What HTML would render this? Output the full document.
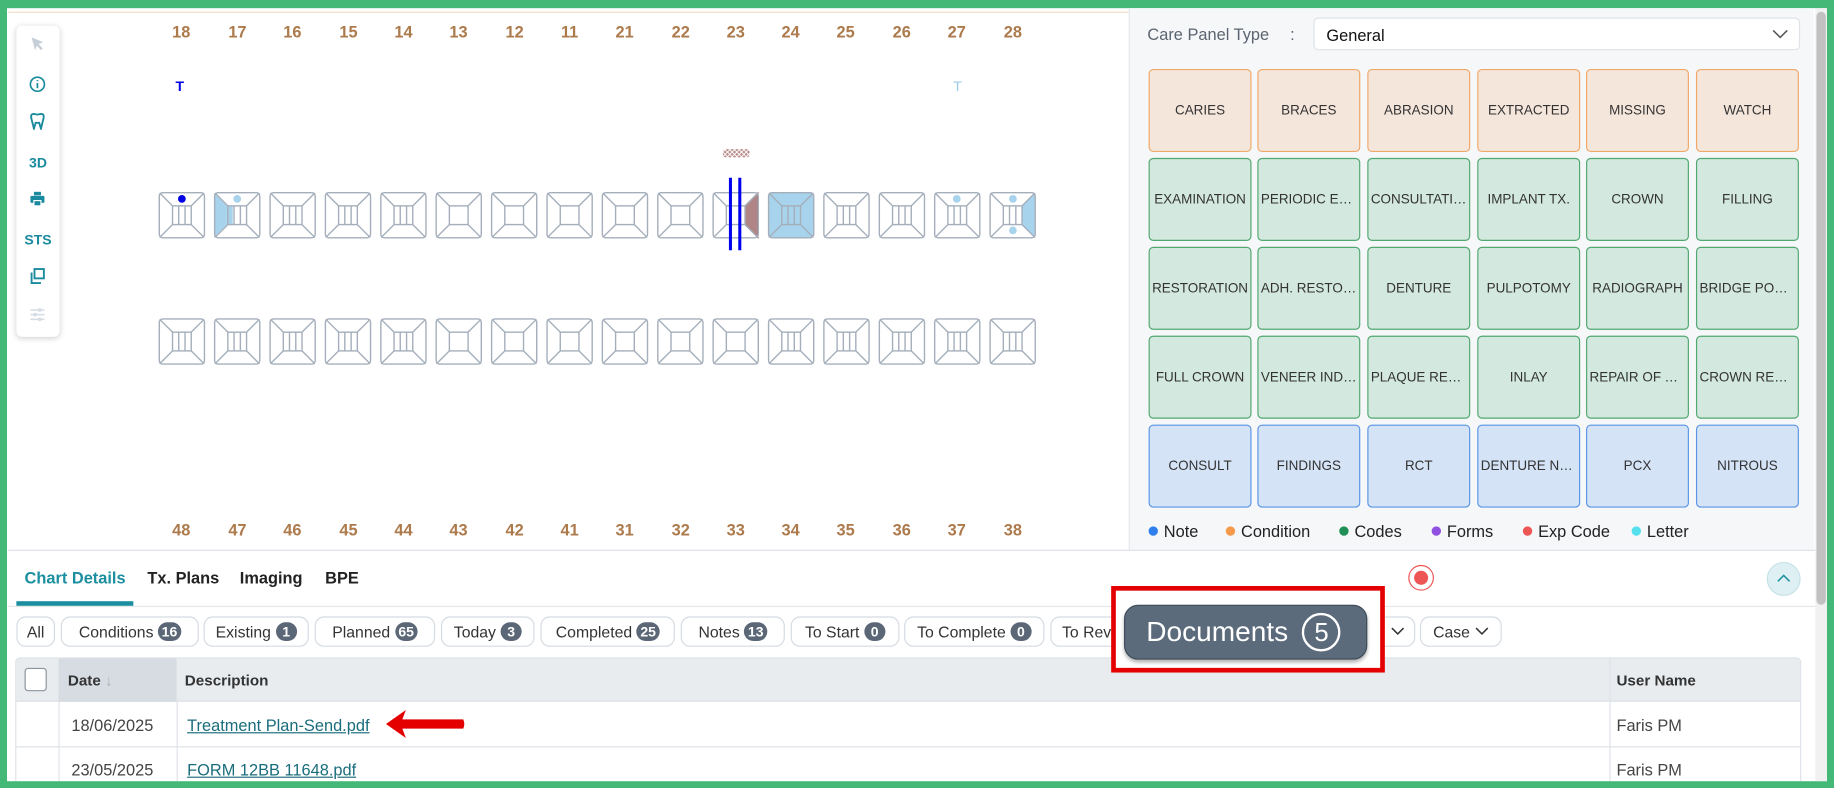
<!DOCTYPE html>
<html><head><meta charset="utf-8"><style>
*{box-sizing:border-box;margin:0;padding:0}
html,body{width:1834px;height:788px;overflow:hidden;background:#44b977}
#s{position:absolute;left:0;top:0;width:1568px;height:674px;transform:scale(1.16964);transform-origin:0 0;font-family:"Liberation Sans",sans-serif;background:#44b977}
.a{position:absolute}
#main{position:absolute;left:6px;top:7px;width:1556px;height:661px;background:#fff;overflow:hidden}
.num{position:absolute;font-weight:bold;font-size:14px;color:#ad7a4c;width:30px;text-align:center}
.btn{position:absolute;width:88px;height:71px;border-radius:4px;font-size:11.5px;color:#333;display:flex;align-items:center;justify-content:center;white-space:nowrap;overflow:hidden;text-overflow:ellipsis;padding:0 2px}
.o{background:#f5e6dc;border:1px solid #f0a868}
.g{background:#d3e8de;border:1px solid #52a871}
.b{background:#d4e3f6;border:1px solid #5a95e6}
.btn span{overflow:hidden;text-overflow:ellipsis;display:block}
.chip{position:absolute;top:527px;height:26px;border:1px solid #d5dbe2;border-radius:8px;font-size:13.5px;color:#333;display:flex;align-items:center;justify-content:center;gap:4px;background:#fff;white-space:nowrap;overflow:hidden}
.bd{display:inline-block;min-width:18px;height:16px;border-radius:8px;background:#5b6776;color:#fff;font-size:12px;line-height:16px;text-align:center;padding:0 3px;font-weight:bold}
.leg{position:absolute;top:446px;font-size:14px;color:#222;display:flex;align-items:center;gap:5px}
.leg i{display:inline-block;width:8px;height:8px;border-radius:50%}
.tb{position:absolute;left:14px;width:37px;text-align:center;color:#1a8a9e;font-weight:bold;font-size:12px}
</style></head><body><div id="s">
<div id="main"></div>
<div class="a" style="left:7px;top:10px;width:958px;height:1px;background:#f0dcc8"></div>
<div class="a" style="left:965px;top:7px;width:586px;height:463px;background:#f5f7f9;border-left:1px solid #e3e7eb"></div>
<div class="a" style="left:1552px;top:7px;width:10px;height:661px;background:#f1f1f1"></div>
<div class="a" style="left:1553px;top:10px;width:8px;height:507px;background:#c1c1c1;border-radius:4px"></div>
<div class="a" style="left:981px;top:21px;font-size:14px;color:#5b6470">Care Panel Type</div>
<div class="a" style="left:1103px;top:21px;font-size:14px;color:#5b6470">:</div>
<div class="a" style="left:1123px;top:15px;width:416px;height:28px;background:#fff;border:1px solid #dfe3e8;border-radius:4px;font-size:14px;color:#111;padding:6px 10px">General
<svg class="a" style="right:9px;top:8px" width="14" height="10" viewBox="0 0 14 10"><path d="M1 2l6 6 6-6" fill="none" stroke="#555" stroke-width="1.3"/></svg></div>

<div class="btn o" style="left:982px;top:59px">CARIES</div>
<div class="btn o" style="left:1075px;top:59px">BRACES</div>
<div class="btn o" style="left:1169px;top:59px">ABRASION</div>
<div class="btn o" style="left:1263px;top:59px">EXTRACTED</div>
<div class="btn o" style="left:1356px;top:59px">MISSING</div>
<div class="btn o" style="left:1450px;top:59px">WATCH</div>

<div class="btn g" style="left:982px;top:135px"><span>EXAMINATION</span></div>
<div class="btn g" style="left:1075px;top:135px"><span>PERIODIC EXAM</span></div>
<div class="btn g" style="left:1169px;top:135px"><span>CONSULTATION</span></div>
<div class="btn g" style="left:1263px;top:135px"><span>IMPLANT TX.</span></div>
<div class="btn g" style="left:1356px;top:135px"><span>CROWN</span></div>
<div class="btn g" style="left:1450px;top:135px"><span>FILLING</span></div>

<div class="btn g" style="left:982px;top:211px"><span>RESTORATION</span></div>
<div class="btn g" style="left:1075px;top:211px"><span>ADH. RESTORATION</span></div>
<div class="btn g" style="left:1169px;top:211px"><span>DENTURE</span></div>
<div class="btn g" style="left:1263px;top:211px"><span>PULPOTOMY</span></div>
<div class="btn g" style="left:1356px;top:211px"><span>RADIOGRAPH</span></div>
<div class="btn g" style="left:1450px;top:211px"><span>BRIDGE PONTIC</span></div>

<div class="btn g" style="left:982px;top:287px"><span>FULL CROWN</span></div>
<div class="btn g" style="left:1075px;top:287px"><span>VENEER INDIRECT</span></div>
<div class="btn g" style="left:1169px;top:287px"><span>PLAQUE REMOVAL</span></div>
<div class="btn g" style="left:1263px;top:287px"><span>INLAY</span></div>
<div class="btn g" style="left:1356px;top:287px"><span>REPAIR OF TIME</span></div>
<div class="btn g" style="left:1450px;top:287px"><span>CROWN REMOVAL</span></div>

<div class="btn b" style="left:982px;top:363px">CONSULT</div>
<div class="btn b" style="left:1075px;top:363px">FINDINGS</div>
<div class="btn b" style="left:1169px;top:363px">RCT</div>
<div class="btn b" style="left:1263px;top:363px"><span>DENTURE NOTE</span></div>
<div class="btn b" style="left:1356px;top:363px">PCX</div>
<div class="btn b" style="left:1450px;top:363px">NITROUS</div>

<div class="leg" style="left:982px"><i style="background:#2f7fec"></i>Note</div>
<div class="leg" style="left:1048px"><i style="background:#f5994a"></i>Condition</div>
<div class="leg" style="left:1145px"><i style="background:#1f8f55"></i>Codes</div>
<div class="leg" style="left:1224px"><i style="background:#9050e0"></i>Forms</div>
<div class="leg" style="left:1302px"><i style="background:#ee5555"></i>Exp Code</div>
<div class="leg" style="left:1395px"><i style="background:#55e0ee"></i>Letter</div>

<div class="a" style="left:14px;top:22px;width:37px;height:266px;background:#fff;border-radius:5px;box-shadow:0 1px 5px rgba(0,0,0,.18)"></div>
<svg class="a" style="left:25px;top:31px" width="14" height="14" viewBox="0 0 14 14"><path d="M2 1l10 4-4 1.5 3.5 4-1.5 1.5-3.5-4L5 12z" fill="#c6cfd8"/></svg>
<svg class="a" style="left:25px;top:65px" width="14" height="14" viewBox="0 0 14 14"><circle cx="7" cy="7" r="6" fill="none" stroke="#1a8a9e" stroke-width="1.4"/><path d="M7 6v4.5M7 3.5v1" stroke="#1a8a9e" stroke-width="1.5"/></svg>
<svg class="a" style="left:25px;top:96px" width="14" height="15" viewBox="0 0 14 15"><path d="M2 2c2-1.5 3.5 0 5 0s3-1.5 5 0c1 2 0 4-.5 6L10 14l-1.5-5H5.5L4 14 2.5 8C2 6 1 4 2 2z" fill="none" stroke="#1a8a9e" stroke-width="1.6"/></svg>
<div class="tb" style="top:132px">3D</div>
<svg class="a" style="left:25px;top:163px" width="14" height="14" viewBox="0 0 14 14"><rect x="4" y="1" width="6" height="3" fill="#1a8a9e"/><rect x="1" y="4.5" width="12" height="6" rx="1" fill="#1a8a9e"/><rect x="4" y="8.5" width="6" height="4.5" fill="#1a8a9e" stroke="#fff" stroke-width="1"/></svg>
<div class="tb" style="top:198px">STS</div>
<svg class="a" style="left:25px;top:229px" width="14" height="15" viewBox="0 0 14 15"><rect x="4.5" y="1" width="8" height="8" fill="none" stroke="#1a8a9e" stroke-width="1.6"/><path d="M2 4v9h8" fill="none" stroke="#1a8a9e" stroke-width="1.6"/></svg>
<svg class="a" style="left:25px;top:262px" width="14" height="14" viewBox="0 0 14 14"><path d="M1 3h12M1 7h12M1 11h12" stroke="#d5dce3" stroke-width="1.3"/><circle cx="9" cy="3" r="1.6" fill="#d5dce3"/><circle cx="5" cy="7" r="1.6" fill="#d5dce3"/><circle cx="9" cy="11" r="1.6" fill="#d5dce3"/></svg>

<div class="num" style="left:140px;top:19px">18</div><div class="num" style="left:188px;top:19px">17</div><div class="num" style="left:235px;top:19px">16</div><div class="num" style="left:283px;top:19px">15</div><div class="num" style="left:330px;top:19px">14</div><div class="num" style="left:377px;top:19px">13</div><div class="num" style="left:425px;top:19px">12</div><div class="num" style="left:472px;top:19px">11</div><div class="num" style="left:519px;top:19px">21</div><div class="num" style="left:567px;top:19px">22</div><div class="num" style="left:614px;top:19px">23</div><div class="num" style="left:661px;top:19px">24</div><div class="num" style="left:708px;top:19px">25</div><div class="num" style="left:756px;top:19px">26</div><div class="num" style="left:803px;top:19px">27</div><div class="num" style="left:851px;top:19px">28</div>
<div class="num" style="left:140px;top:445px">48</div><div class="num" style="left:188px;top:445px">47</div><div class="num" style="left:235px;top:445px">46</div><div class="num" style="left:283px;top:445px">45</div><div class="num" style="left:330px;top:445px">44</div><div class="num" style="left:377px;top:445px">43</div><div class="num" style="left:425px;top:445px">42</div><div class="num" style="left:472px;top:445px">41</div><div class="num" style="left:519px;top:445px">31</div><div class="num" style="left:567px;top:445px">32</div><div class="num" style="left:614px;top:445px">33</div><div class="num" style="left:661px;top:445px">34</div><div class="num" style="left:708px;top:445px">35</div><div class="num" style="left:756px;top:445px">36</div><div class="num" style="left:803px;top:445px">37</div><div class="num" style="left:851px;top:445px">38</div>
<div class="a" style="left:150px;top:67px;font-size:12px;font-weight:bold;color:#0000e6">T</div>
<div class="a" style="left:815px;top:67px;font-size:12px;color:#9ccbe8">T</div>

<svg class="a" style="left:0;top:0" width="965" height="470" viewBox="0 0 965 470">
<defs>
<g id="base"><rect x="0.7" y="0.7" width="38.6" height="38.6" rx="3" fill="none" stroke="#a5afbb" stroke-width="1.2"/><rect x="12" y="12" width="16" height="16" fill="none" stroke="#a5afbb" stroke-width="1.2"/><path d="M1 1L12 12M39 1L28 12M1 39L12 28M39 39L28 28" stroke="#a5afbb" stroke-width="1.2"/></g>
<g id="m"><use href="#base"/><path d="M17.3 12v16M22.7 12v16" stroke="#a5afbb" stroke-width="1.2"/></g>
<g id="p"><use href="#base"/></g>
<pattern id="hx" width="4" height="4" patternUnits="userSpaceOnUse"><rect width="4" height="4" fill="#b88a8a"/><path d="M0 0L4 4M4 0L0 4" stroke="#fff" stroke-width="0.8"/></pattern>
</defs>
<polygon points="183,165 194,176 194,192 183,203" fill="#a8d3ec"/><rect x="194" y="176" width="5" height="16" fill="#a8d3ec"/>
<circle cx="155.5" cy="170" r="3.3" fill="#0000e6"/><circle cx="202.8" cy="170" r="3.3" fill="#a8d3ec"/>
<rect x="657" y="164.7" width="38.6" height="38.6" rx="3" fill="#a8d3ec"/>
<polygon points="648,165 637,176 637,192 648,203" fill="#b08585" stroke="#8a5a5a"/>
<circle cx="818" cy="170" r="3.3" fill="#a8d3ec"/><circle cx="866" cy="170" r="3.3" fill="#a8d3ec"/><circle cx="866" cy="197" r="3.3" fill="#a8d3ec"/>
<polygon points="885,165 874,176 874,192 885,203" fill="#a8d3ec"/>
<rect x="618" y="127.5" width="23" height="7" rx="2.5" fill="url(#hx)"/>
<use href="#m" x="135.5" y="164"/><use href="#m" x="182.8" y="164"/><use href="#m" x="230.2" y="164"/><use href="#m" x="277.5" y="164"/><use href="#m" x="324.9" y="164"/>
<use href="#p" x="372.2" y="164"/><use href="#p" x="419.6" y="164"/><use href="#p" x="467" y="164"/><use href="#p" x="514.3" y="164"/><use href="#p" x="561.7" y="164"/><use href="#p" x="609" y="164"/>
<use href="#m" x="656.4" y="164"/><use href="#m" x="703.7" y="164"/><use href="#m" x="751.1" y="164"/><use href="#m" x="798.4" y="164"/><use href="#m" x="845.8" y="164"/>
<use href="#m" x="135.5" y="272"/><use href="#m" x="182.8" y="272"/><use href="#m" x="230.2" y="272"/><use href="#m" x="277.5" y="272"/><use href="#m" x="324.9" y="272"/>
<use href="#p" x="372.2" y="272"/><use href="#p" x="419.6" y="272"/><use href="#p" x="467" y="272"/><use href="#p" x="514.3" y="272"/><use href="#p" x="561.7" y="272"/><use href="#p" x="609" y="272"/>
<use href="#m" x="656.4" y="272"/><use href="#m" x="703.7" y="272"/><use href="#m" x="751.1" y="272"/><use href="#m" x="798.4" y="272"/><use href="#m" x="845.8" y="272"/>
<path d="M624.5 152v62M632.5 152v62" stroke="#0000ee" stroke-width="2.6"/>
</svg>

<div class="a" style="left:7px;top:470px;width:1545px;height:1px;background:#dde2e8"></div>
<div class="a" style="left:21px;top:486px;font-size:14px;font-weight:bold;color:#1b8fa0">Chart Details</div>
<div class="a" style="left:126px;top:486px;font-size:14px;font-weight:bold;color:#222">Tx. Plans</div>
<div class="a" style="left:205px;top:486px;font-size:14px;font-weight:bold;color:#222">Imaging</div>
<div class="a" style="left:278px;top:486px;font-size:14px;font-weight:bold;color:#222">BPE</div>
<div class="a" style="left:14px;top:514px;width:100px;height:4px;background:#1b8fa0"></div>
<div class="a" style="left:7px;top:518px;width:1545px;height:1px;background:#e3e7eb"></div>
<svg class="a" style="left:1203px;top:482px" width="24" height="24" viewBox="0 0 24 24"><circle cx="12" cy="12" r="10.5" fill="#fff" stroke="#ee5555" stroke-width="1"/><circle cx="12" cy="12" r="6" fill="#ee5555"/></svg>
<svg class="a" style="left:1510px;top:480px" width="30" height="30" viewBox="0 0 30 30"><circle cx="15" cy="15" r="14" fill="#dff0f4" stroke="#c5e1e8"/><path d="M10 17l5-5 5 5" fill="none" stroke="#1b8fa0" stroke-width="1.3"/></svg>

<div class="chip" style="left:14px;width:33px">All</div>
<div class="chip" style="left:52px;width:118px">Conditions <span class="bd">16</span></div>
<div class="chip" style="left:174px;width:90px">Existing <span class="bd">1</span></div>
<div class="chip" style="left:269px;width:103px">Planned <span class="bd">65</span></div>
<div class="chip" style="left:377px;width:80px">Today <span class="bd">3</span></div>
<div class="chip" style="left:462px;width:115px">Completed <span class="bd">25</span></div>
<div class="chip" style="left:582px;width:89px">Notes <span class="bd">13</span></div>
<div class="chip" style="left:676px;width:93px">To Start <span class="bd">0</span></div>
<div class="chip" style="left:773px;width:120px">To Complete <span class="bd">0</span></div>
<div class="chip" style="left:898px;width:80px;justify-content:flex-start;padding-left:9px">To Review</div>
<div class="chip" style="left:1165px;width:45px;justify-content:flex-end;padding-right:8px"><svg width="12" height="8" viewBox="0 0 12 8"><path d="M1 1l5 5 5-5" fill="none" stroke="#333" stroke-width="1.3"/></svg></div>
<div class="chip" style="left:1214px;width:70px">Case <svg width="12" height="8" viewBox="0 0 12 8"><path d="M1 1l5 5 5-5" fill="none" stroke="#333" stroke-width="1.3"/></svg></div>

<div class="a" style="left:13px;top:562px;width:1527px;height:112px;border:1px solid #dde2e8;border-radius:4px 4px 0 0;overflow:hidden">
<div class="a" style="left:0;top:0;width:1527px;height:37px;background:#e9ecef;border-bottom:1px solid #dde2e8"></div>
<div class="a" style="left:36px;top:0;width:101px;height:37px;background:#d6dce2"></div>
<div class="a" style="left:7px;top:8px;width:19px;height:20px;background:#fff;border:1px solid #8a939c;border-radius:3px"></div>
<div class="a" style="left:44px;top:11px;font-size:13px;font-weight:bold;color:#333">Date <span style="color:#aab2ba;font-weight:normal">↓</span></div>
<div class="a" style="left:144px;top:11px;font-size:13px;font-weight:bold;color:#333">Description</div>
<div class="a" style="left:1368px;top:11px;font-size:13px;font-weight:bold;color:#333">User Name</div>
<div class="a" style="left:36px;top:37px;width:1px;height:80px;background:#dde2e8"></div>
<div class="a" style="left:137px;top:37px;width:1px;height:80px;background:#dde2e8"></div>
<div class="a" style="left:1362px;top:0;width:1px;height:117px;background:#dde2e8"></div>
<div class="a" style="left:0;top:75px;width:1527px;height:1px;background:#dde2e8"></div>
<div class="a" style="left:47px;top:49px;font-size:14px;color:#444">18/06/2025</div>
<div class="a" style="left:146px;top:49px;font-size:14px;color:#1a6d7c;text-decoration:underline">Treatment Plan-Send.pdf</div>
<div class="a" style="left:1368px;top:49px;font-size:14px;color:#444">Faris PM</div>
<div class="a" style="left:47px;top:87px;font-size:14px;color:#444">23/05/2025</div>
<div class="a" style="left:146px;top:87px;font-size:14px;color:#1a6d7c;text-decoration:underline">FORM 12BB 11648.pdf</div>
<div class="a" style="left:1368px;top:87px;font-size:14px;color:#444">Faris PM</div>
</div>
<svg class="a" style="left:328px;top:605px" width="72" height="28" viewBox="0 0 72 28"><path d="M2 14L19 2 16 10H68Q70 14 68 18H16L19 26z" fill="#e50000"/></svg>

<div class="a" style="left:950px;top:501px;width:234px;height:74px;border:4px solid #e50000;background:#fff;z-index:5"></div>
<div class="a" style="left:961px;top:517px;width:208px;height:47px;border-radius:12px;background:#5b6b7b;border:1px solid #3d4a57;box-shadow:0 2px 3px rgba(0,0,0,.3);color:#fff;font-size:24px;display:flex;align-items:center;padding-left:18px;gap:12px;z-index:6">Documents <span style="display:inline-block;width:33px;height:33px;border:2px solid #fff;border-radius:50%;text-align:center;line-height:29px;font-size:22px">5</span></div>

<div class="a" style="left:0;top:668px;width:1568px;height:6px;background:#44b977;z-index:7"></div>
</div></body></html>
